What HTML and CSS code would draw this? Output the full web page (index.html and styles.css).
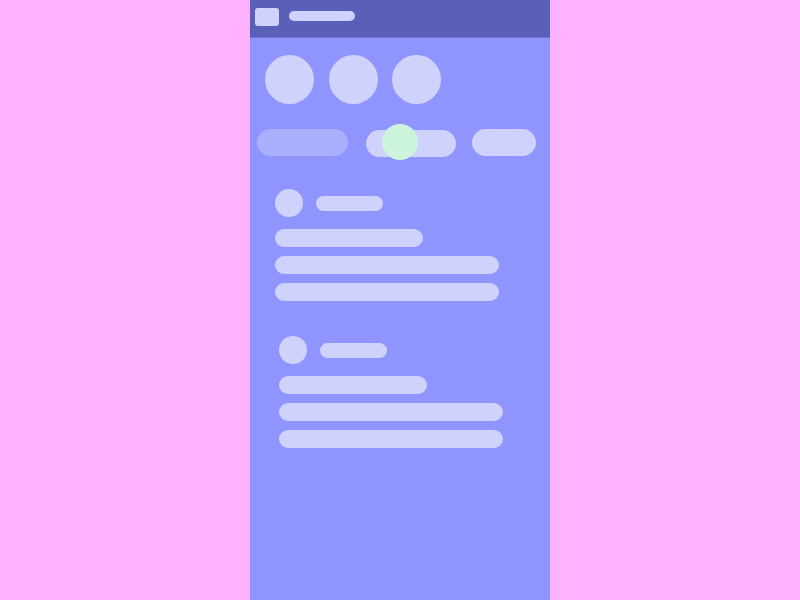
FILE: index.html
```html
<!DOCTYPE html>
<html lang="en">
<head>
<meta charset="utf-8">
<title>Skeleton</title>
<link rel="stylesheet" href="styles.css">
</head>
<body>
<div class="phone">
  <header class="topbar">
    <div class="logo"></div>
    <div class="title"></div>
  </header>
  <div class="stories">
    <div class="story"></div>
    <div class="story"></div>
    <div class="story"></div>
  </div>
  <div class="tabs">
    <div class="tab tab-wide tab-dim"></div>
    <div class="tab tab-mid"><span class="touch"></span></div>
    <div class="tab tab-short"></div>
  </div>
  <div class="feed">
    <div class="card">
      <div class="card-head">
        <div class="avatar"></div>
        <div class="name"></div>
      </div>
      <div class="line line-short"></div>
      <div class="line"></div>
      <div class="line"></div>
    </div>
    <div class="card card-shift">
      <div class="card-head">
        <div class="avatar"></div>
        <div class="name"></div>
      </div>
      <div class="line line-short"></div>
      <div class="line"></div>
      <div class="line"></div>
    </div>
  </div>
</div>
</body>
</html>
```
FILE: styles.css
```css
html, body {
  margin: 0;
  padding: 0;
  height: 100%;
}
body {
  background: #ffb3ff;
  display: flex;
  justify-content: center;
  font-family: "Liberation Sans", sans-serif;
}
.phone {
  width: 300px;
  height: 600px;
  background: #8f94ff;
  overflow: hidden;
}
.topbar {
  height: 37px;
  border-bottom: 1px solid #6f74d6;
  background: #5a5fb8;
  display: flex;
  align-items: center;
  padding-left: 5px;
  gap: 10px;
}
.logo {
  width: 24px;
  height: 18px;
  border-radius: 3px;
  background: #d0d2fe;
  margin-top: -3px;
}
.title {
  width: 66px;
  height: 10px;
  border-radius: 5px;
  background: #d0d2fe;
  margin-top: -6px;
}
.stories {
  display: flex;
  gap: 14.5px;
  padding: 17px 0 0 15px;
}
.story {
  width: 49px;
  height: 49px;
  border-radius: 50%;
  background: #d0d2fe;
}
.tabs {
  display: flex;
  align-items: flex-start;
  padding: 25px 0 0 7px;
}
.tab {
  position: relative;
  height: 27px;
  border-radius: 14px;
  background: #d0d2fe;
}
.tab-wide { width: 91px; }
.tab-dim { background: #aab0fe; }
.tab-mid { width: 90px; margin: 1px 0 0 18px; }
.tab-short { width: 64px; margin-left: 16px; }
.touch {
  position: absolute;
  left: 16px;
  top: -6px;
  width: 36px;
  height: 36px;
  border-radius: 50%;
  background: #cdf4dc;
}
.feed {
  display: flex;
  flex-direction: column;
  gap: 35px;
  padding: 32px 0 0 25px;
}
.card {
  display: flex;
  flex-direction: column;
  gap: 9px;
}
.card-shift { margin-left: 4px; }
.card-head {
  display: flex;
  align-items: center;
  gap: 13px;
  margin-bottom: 3px;
}
.avatar {
  width: 28px;
  height: 28px;
  border-radius: 50%;
  background: #d0d2fe;
}
.name {
  width: 67px;
  height: 15px;
  border-radius: 8px;
  background: #d0d2fe;
}
.line {
  width: 224px;
  height: 18px;
  border-radius: 9px;
  background: #d0d2fe;
}
.line-short { width: 148px; }
```
